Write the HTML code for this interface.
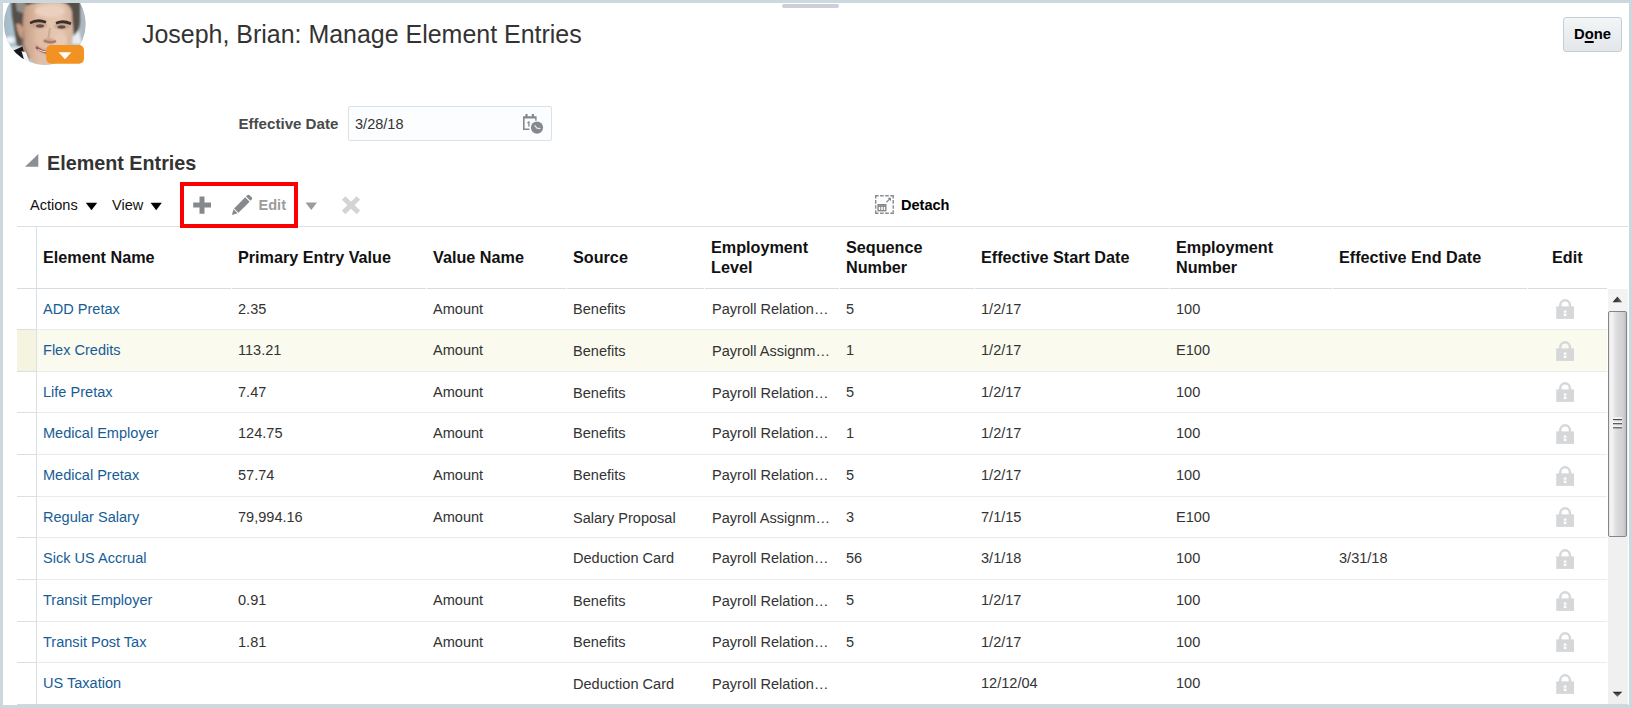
<!DOCTYPE html>
<html>
<head>
<meta charset="utf-8">
<title>Manage Element Entries</title>
<style>
html,body{margin:0;padding:0;}
body{width:1632px;height:708px;overflow:hidden;background:#fff;font-family:"Liberation Sans",Arial,sans-serif;color:#333;position:relative;}
.abs{position:absolute;white-space:nowrap;}
.bd{position:absolute;background:#cbd8de;}
#handle{left:782px;top:4px;width:57px;height:3.5px;border-radius:2px;background:#cccedb;}
#title{left:142px;top:19px;font-size:24.96px;line-height:30px;color:#333;}
#done{left:1563px;top:17px;width:57px;height:33px;border:1px solid #c4ced7;border-radius:3px;background:linear-gradient(#f3f5f6,#e3e7ea);font-weight:bold;font-size:14.8px;line-height:33px;text-align:center;color:#000;}
#done u{text-decoration:underline;text-decoration-thickness:1.6px;text-underline-offset:2px;}
#efl{left:238.5px;top:114px;font-weight:bold;font-size:15.1px;line-height:20px;color:#4a4a4a;}
#efi{left:348px;top:106px;width:202px;height:33px;border:1px solid #dde2e6;border-radius:2px;background:#fcfdfe;}
#efv{left:355px;top:114px;font-size:14.56px;line-height:20px;color:#333;}
#h2{left:47px;top:151px;font-weight:bold;font-size:19.76px;line-height:24px;color:#333;}
.tb{font-size:14.56px;line-height:20px;color:#111;top:195px;}
.hline{position:absolute;height:1px;background:#d9e1e7;}
.vline{position:absolute;width:1px;background:#d9e1e7;}
.th{position:absolute;font-weight:bold;font-size:16.2px;line-height:20px;color:#111;white-space:nowrap;}
.row{position:absolute;left:17px;width:1590px;height:41.6px;border-top:1px solid #ebebeb;box-sizing:border-box;}
.row.hl{background:linear-gradient(90deg,#f4f4e1 0,#f4f4e1 19px,#fafaee 19px);}
.c{position:absolute;top:0;font-size:14.56px;line-height:40px;color:#333;white-space:nowrap;}
.c.l{color:#165d96;}
.c.e{width:122px;overflow:hidden;text-overflow:ellipsis;}
.lock{position:absolute;left:1538px;}
#redbox{left:180px;top:182px;width:110px;height:38px;border:4px solid #fb0000;}
</style>
</head>
<body>
<div class="bd" style="left:0;top:0;width:1632px;height:3px"></div>
<div class="bd" style="left:0;top:0;width:3px;height:708px"></div>
<div class="bd" style="left:1629px;top:0;width:3px;height:708px"></div>
<div class="bd" style="left:0;top:705px;width:1632px;height:3px"></div>
<div class="abs" style="left:17px;top:704px;width:1611px;height:1px;background:#cfd9df"></div>
<div class="abs" id="handle"></div>
<svg class="abs" style="left:3px;top:3px" width="86" height="64" viewBox="3 3 86 64">
<defs>
<clipPath id="avc"><circle cx="44.8" cy="24" r="40.9"/></clipPath>
<filter id="b1" x="-20%" y="-20%" width="140%" height="140%"><feGaussianBlur stdDeviation="1.1"/></filter>
<filter id="b2" x="-20%" y="-20%" width="140%" height="140%"><feGaussianBlur stdDeviation="0.7"/></filter>
<linearGradient id="bgg" x1="0" x2="1" y1="0" y2="0"><stop offset="0" stop-color="#9db6c4"/><stop offset="0.25" stop-color="#b9cad3"/><stop offset="0.8" stop-color="#b9c0c8"/><stop offset="1" stop-color="#aab2bb"/></linearGradient>
<linearGradient id="skin" x1="0" x2="1" y1="0" y2="0"><stop offset="0" stop-color="#c39a82"/><stop offset="0.3" stop-color="#dfbda6"/><stop offset="0.75" stop-color="#e6c8b3"/><stop offset="1" stop-color="#d6b29b"/></linearGradient>
</defs>
<g clip-path="url(#avc)">
<rect x="0" y="0" width="90" height="70" fill="url(#bgg)"/>
<g filter="url(#b1)">
<ellipse cx="10" cy="40" rx="4.5" ry="3.5" fill="#eef4f8"/>
<rect x="4" y="47" width="18" height="3.5" fill="#e2eaef"/>
<path d="M73 36 L79 31 L82 44 L72 44 Z" fill="#e9edf0"/>
<path d="M12 -4 H80 V18 Q81 28 74 36 L71 14 L30 7 L25 28 L24 46 L17 46 L14 28 Q10 10 12 -4 Z" fill="#54504a"/>
<path d="M15 -2 Q24 1 29 7 L25 14 L17 11 Z" fill="#908e89"/>
<path d="M16 24 Q20 22 23 28 L24 40 Q18 38 16 24 Z" fill="#c99c82"/>
<path d="M26 6 Q40 0 60 2 Q72 4 72 14 L73 30 Q72 48 64 58 Q56 68 46 68 Q34 68 28 54 L23 30 Q22 14 26 6 Z" fill="url(#skin)"/>
<ellipse cx="50" cy="11" rx="15" ry="6" fill="#ead0be"/>
<ellipse cx="60" cy="40" rx="7" ry="7" fill="#e8cab6"/><ellipse cx="39" cy="25" rx="8" ry="3.6" fill="#bf9883" opacity="0.75"/><ellipse cx="62" cy="26" rx="8" ry="3.6" fill="#bf9883" opacity="0.75"/><ellipse cx="49" cy="41" rx="6" ry="2.6" fill="#b98f7a" opacity="0.7"/><path d="M34 44 Q40 56 54 56 L54 50 Q42 50 36 44 Z" fill="#c49a86" opacity="0.7"/>
<path d="M23 30 Q24 46 30 58 L27 60 L22 46 Z" fill="#a47d66"/>
</g>
<g filter="url(#b2)">
<path d="M8 53 L22.5 46.5 L29 70 H8 Z" fill="#12161c"/>
<path d="M21.5 51 L26 52.5 L31.5 68 L26.5 68 Z" fill="#f4f5f7"/>
<path d="M29.5 22 Q37 17 46.5 21 L45.5 23.6 Q37 20.8 30.5 24.2 Z" fill="#3a2e28"/>
<path d="M55.5 22 Q63 18.5 71.5 22.5 L70.5 25 Q63 21.8 56.5 24.4 Z" fill="#3a2e28"/>
<ellipse cx="40" cy="26" rx="4" ry="1.7" fill="#5f4d44"/>
<ellipse cx="61.5" cy="27" rx="4" ry="1.7" fill="#5f4d44"/>
<path d="M50 28 L48 40" stroke="#cfa890" stroke-width="2" fill="none"/>
<path d="M44 40.5 Q50 44 56 41" stroke="#a97a64" stroke-width="2.2" fill="none"/>
<path d="M36 47 Q42 52.5 50 52.5" stroke="#99594f" stroke-width="2.4" fill="none"/>
<path d="M38 49.5 Q43 52 48 52" stroke="#f0e4e0" stroke-width="1" fill="none"/>
</g>
</g>
<rect x="46.2" y="45" width="37.8" height="18.8" rx="5" ry="5" fill="#f29222"/>
<path d="M58.5 52.2 H71.4 L65 59.2 Z" fill="#fff"/>
</svg>

<div class="abs" id="title">Joseph, Brian: Manage Element Entries</div>
<div class="abs" id="done">D<u>o</u>ne</div>
<div class="abs" id="efl">Effective Date</div>
<div class="abs" id="efi"></div>
<div class="abs" id="efv">3/28/18</div>
<svg class="abs" style="left:522px;top:113px" width="24" height="24" viewBox="0 0 24 24"><path d="M1 3.2 H14.6 V9 H13.2 V5.6 H2.6 V15.4 H7.4 V17 H1 Z" fill="#85898d"/><rect x="3.4" y="1" width="2.2" height="3.4" fill="#85898d"/><rect x="9.8" y="1" width="2.2" height="3.4" fill="#85898d"/><path d="M5.2 9.4 L6.6 8.2 H7.6 V13.6 H6.2 V10 L5.2 10.6 Z" fill="#85898d"/><circle cx="15" cy="14.6" r="7.1" fill="#fcfdfe"/><circle cx="15" cy="14.6" r="6.1" fill="#85898d"/><path d="M12.6 12.4 L15 15.2 L18.4 15.6" stroke="#e8eaec" stroke-width="1.2" fill="none"/></svg>

<svg class="abs" style="left:24px;top:153px" width="16" height="16" viewBox="0 0 16 16"><path d="M14.3 1 V13.8 H1 Z" fill="#8a9096"/></svg>
<div class="abs" id="h2">Element Entries</div>
<div class="abs tb" style="left:30px">Actions</div>
<svg class="abs" style="left:85px;top:202px" width="13" height="9" viewBox="0 0 13 9"><path d="M0.8 0.7 H12.2 L6.5 8.2 Z" fill="#000"/></svg>
<div class="abs tb" style="left:112px">View</div>
<svg class="abs" style="left:150px;top:202px" width="13" height="9" viewBox="0 0 13 9"><path d="M0.6 0.7 H11.8 L6.2 8.2 Z" fill="#000"/></svg>
<svg class="abs" style="left:192px;top:195px" width="20" height="20" viewBox="0 0 20 20"><path d="M7.5 1.4 H12.5 V7.4 H19 V12.4 H12.5 V18.8 H7.5 V12.4 H1.2 V7.4 H7.5 Z" fill="#85898d"/></svg>
<svg class="abs" style="left:231px;top:194px" width="22" height="22" viewBox="0 0 22 22"><path d="M0.9 20.9 L2.5 15.2 L6.6 19.3 Z" fill="#85898d"/><path d="M3.1 14.4 L14.2 3.3 L18.6 7.7 L7.5 18.8 Z" fill="#85898d"/><path d="M15 2.5 L16.5 1 Q17.4 0.3 18.3 1.1 L20.8 3.6 Q21.5 4.5 20.8 5.3 L19.4 6.8 Z" fill="#85898d"/></svg>
<svg class="abs" style="left:305px;top:202px" width="13" height="9" viewBox="0 0 13 9"><path d="M0.5 0.6 H12 L6.25 8 Z" fill="#9b9b9b"/></svg>
<svg class="abs" style="left:341px;top:195px" width="20" height="20" viewBox="0 0 20 20"><path d="M2.6 3 L17.4 17.4 M17.4 3 L2.6 17.4" stroke="#d2d4d6" stroke-width="5" fill="none"/></svg>
<svg class="abs" style="left:874px;top:194px" width="21" height="21" viewBox="0 0 21 21"><path d="M1 1.7 H19.9 M19.2 1 V19.9 M19.9 19.2 H1 M1.7 19.9 V1" fill="none" stroke="#888c90" stroke-width="1.4" stroke-dasharray="3.6 1.5"/><rect x="4.1" y="10.7" width="7.7" height="6" fill="#fff" stroke="#85898d" stroke-width="1.4"/><path d="M4 12.1 H12" stroke="#85898d" stroke-width="1.6" fill="none"/><path d="M6.7 10.5 V16.8 M9.3 10.5 V16.8" stroke="#85898d" stroke-width="1" fill="none"/><path d="M12.4 8.2 L16 4.6" stroke="#85898d" stroke-width="1.3" fill="none"/><path d="M13.6 3.8 H17 V7.2 Z" fill="#85898d"/></svg>

<div class="abs tb" style="left:258.5px;font-weight:bold;color:#9c9c9c">Edit</div>
<div class="abs tb" style="left:901px;font-weight:bold;color:#000">Detach</div>

<div class="hline" style="left:17px;top:226px;width:1611px"></div>
<div class="hline" style="left:17px;top:288px;width:1590px;background:#d3dce3"></div>
<div class="th" style="left:43px;top:247px">Element Name</div>
<div class="th" style="left:238px;top:247px">Primary Entry Value</div>
<div class="th" style="left:433px;top:247px">Value Name</div>
<div class="th" style="left:573px;top:247px">Source</div>
<div class="th" style="left:711px;top:237px">Employment<br>Level</div>
<div class="th" style="left:846px;top:237px">Sequence<br>Number</div>
<div class="th" style="left:981px;top:247px">Effective Start Date</div>
<div class="th" style="left:1176px;top:237px">Employment<br>Number</div>
<div class="th" style="left:1339px;top:247px">Effective End Date</div>
<div class="th" style="left:1552px;top:247px">Edit</div>
<div class="row" style="top:288px;height:41px;border-top-color:#d6dee5"><div class="c l" style="left:26px">ADD Pretax</div><div class="c" style="left:221px">2.35</div><div class="c" style="left:416px">Amount</div><div class="c" style="left:556px">Benefits</div><div class="c e" style="left:695px">Payroll Relationship</div><div class="c" style="left:829px">5</div><div class="c" style="left:964px">1/2/17</div><div class="c" style="left:1159px">100</div><svg class="lock" style="bottom:9.2px" width="20" height="22" viewBox="0 0 20 22"><path d="M5.25 9 V7.2 a4.85 4.85 0 0 1 9.7 0 V9" fill="none" stroke="#d5d7d9" stroke-width="2.5"/><rect x="1.2" y="8.4" width="17.8" height="12.5" fill="#d5d7d9"/><rect x="8.8" y="12.5" width="2.6" height="2.2" fill="#fff"/><rect x="8.8" y="15.6" width="2.6" height="2.5" fill="#fff"/></svg></div>
<div class="row hl" style="top:329px;height:42px"><div class="c l" style="left:26px">Flex Credits</div><div class="c" style="left:221px">113.21</div><div class="c" style="left:416px">Amount</div><div class="c" style="left:556px;top:1px">Benefits</div><div class="c e" style="left:695px;top:1px">Payroll Assignment</div><div class="c" style="left:829px">1</div><div class="c" style="left:964px">1/2/17</div><div class="c" style="left:1159px">E100</div><svg class="lock" style="bottom:9.2px" width="20" height="22" viewBox="0 0 20 22"><path d="M5.25 9 V7.2 a4.85 4.85 0 0 1 9.7 0 V9" fill="none" stroke="#d5d7d9" stroke-width="2.5"/><rect x="1.2" y="8.4" width="17.8" height="12.5" fill="#d5d7d9"/><rect x="8.8" y="12.5" width="2.6" height="2.2" fill="#fff"/><rect x="8.8" y="15.6" width="2.6" height="2.5" fill="#fff"/></svg></div>
<div class="row" style="top:371px;height:41px"><div class="c l" style="left:26px">Life Pretax</div><div class="c" style="left:221px">7.47</div><div class="c" style="left:416px">Amount</div><div class="c" style="left:556px;top:1px">Benefits</div><div class="c e" style="left:695px;top:1px">Payroll Relationship</div><div class="c" style="left:829px">5</div><div class="c" style="left:964px">1/2/17</div><div class="c" style="left:1159px">100</div><svg class="lock" style="bottom:9.2px" width="20" height="22" viewBox="0 0 20 22"><path d="M5.25 9 V7.2 a4.85 4.85 0 0 1 9.7 0 V9" fill="none" stroke="#d5d7d9" stroke-width="2.5"/><rect x="1.2" y="8.4" width="17.8" height="12.5" fill="#d5d7d9"/><rect x="8.8" y="12.5" width="2.6" height="2.2" fill="#fff"/><rect x="8.8" y="15.6" width="2.6" height="2.5" fill="#fff"/></svg></div>
<div class="row" style="top:412px;height:42px"><div class="c l" style="left:26px">Medical Employer</div><div class="c" style="left:221px">124.75</div><div class="c" style="left:416px">Amount</div><div class="c" style="left:556px">Benefits</div><div class="c e" style="left:695px">Payroll Relationship</div><div class="c" style="left:829px">1</div><div class="c" style="left:964px">1/2/17</div><div class="c" style="left:1159px">100</div><svg class="lock" style="bottom:9.2px" width="20" height="22" viewBox="0 0 20 22"><path d="M5.25 9 V7.2 a4.85 4.85 0 0 1 9.7 0 V9" fill="none" stroke="#d5d7d9" stroke-width="2.5"/><rect x="1.2" y="8.4" width="17.8" height="12.5" fill="#d5d7d9"/><rect x="8.8" y="12.5" width="2.6" height="2.2" fill="#fff"/><rect x="8.8" y="15.6" width="2.6" height="2.5" fill="#fff"/></svg></div>
<div class="row" style="top:454px;height:42px"><div class="c l" style="left:26px">Medical Pretax</div><div class="c" style="left:221px">57.74</div><div class="c" style="left:416px">Amount</div><div class="c" style="left:556px">Benefits</div><div class="c e" style="left:695px">Payroll Relationship</div><div class="c" style="left:829px">5</div><div class="c" style="left:964px">1/2/17</div><div class="c" style="left:1159px">100</div><svg class="lock" style="bottom:9.2px" width="20" height="22" viewBox="0 0 20 22"><path d="M5.25 9 V7.2 a4.85 4.85 0 0 1 9.7 0 V9" fill="none" stroke="#d5d7d9" stroke-width="2.5"/><rect x="1.2" y="8.4" width="17.8" height="12.5" fill="#d5d7d9"/><rect x="8.8" y="12.5" width="2.6" height="2.2" fill="#fff"/><rect x="8.8" y="15.6" width="2.6" height="2.5" fill="#fff"/></svg></div>
<div class="row" style="top:496px;height:41px"><div class="c l" style="left:26px">Regular Salary</div><div class="c" style="left:221px">79,994.16</div><div class="c" style="left:416px">Amount</div><div class="c" style="left:556px;top:1px">Salary Proposal</div><div class="c e" style="left:695px;top:1px">Payroll Assignment</div><div class="c" style="left:829px">3</div><div class="c" style="left:964px">7/1/15</div><div class="c" style="left:1159px">E100</div><svg class="lock" style="bottom:9.2px" width="20" height="22" viewBox="0 0 20 22"><path d="M5.25 9 V7.2 a4.85 4.85 0 0 1 9.7 0 V9" fill="none" stroke="#d5d7d9" stroke-width="2.5"/><rect x="1.2" y="8.4" width="17.8" height="12.5" fill="#d5d7d9"/><rect x="8.8" y="12.5" width="2.6" height="2.2" fill="#fff"/><rect x="8.8" y="15.6" width="2.6" height="2.5" fill="#fff"/></svg></div>
<div class="row" style="top:537px;height:42px"><div class="c l" style="left:26px">Sick US Accrual</div><div class="c" style="left:556px">Deduction Card</div><div class="c e" style="left:695px">Payroll Relationship</div><div class="c" style="left:829px">56</div><div class="c" style="left:964px">3/1/18</div><div class="c" style="left:1159px">100</div><div class="c" style="left:1322px">3/31/18</div><svg class="lock" style="bottom:9.2px" width="20" height="22" viewBox="0 0 20 22"><path d="M5.25 9 V7.2 a4.85 4.85 0 0 1 9.7 0 V9" fill="none" stroke="#d5d7d9" stroke-width="2.5"/><rect x="1.2" y="8.4" width="17.8" height="12.5" fill="#d5d7d9"/><rect x="8.8" y="12.5" width="2.6" height="2.2" fill="#fff"/><rect x="8.8" y="15.6" width="2.6" height="2.5" fill="#fff"/></svg></div>
<div class="row" style="top:579px;height:42px"><div class="c l" style="left:26px">Transit Employer</div><div class="c" style="left:221px">0.91</div><div class="c" style="left:416px">Amount</div><div class="c" style="left:556px;top:1px">Benefits</div><div class="c e" style="left:695px;top:1px">Payroll Relationship</div><div class="c" style="left:829px">5</div><div class="c" style="left:964px">1/2/17</div><div class="c" style="left:1159px">100</div><svg class="lock" style="bottom:9.2px" width="20" height="22" viewBox="0 0 20 22"><path d="M5.25 9 V7.2 a4.85 4.85 0 0 1 9.7 0 V9" fill="none" stroke="#d5d7d9" stroke-width="2.5"/><rect x="1.2" y="8.4" width="17.8" height="12.5" fill="#d5d7d9"/><rect x="8.8" y="12.5" width="2.6" height="2.2" fill="#fff"/><rect x="8.8" y="15.6" width="2.6" height="2.5" fill="#fff"/></svg></div>
<div class="row" style="top:621px;height:41px"><div class="c l" style="left:26px">Transit Post Tax</div><div class="c" style="left:221px">1.81</div><div class="c" style="left:416px">Amount</div><div class="c" style="left:556px">Benefits</div><div class="c e" style="left:695px">Payroll Relationship</div><div class="c" style="left:829px">5</div><div class="c" style="left:964px">1/2/17</div><div class="c" style="left:1159px">100</div><svg class="lock" style="bottom:9.2px" width="20" height="22" viewBox="0 0 20 22"><path d="M5.25 9 V7.2 a4.85 4.85 0 0 1 9.7 0 V9" fill="none" stroke="#d5d7d9" stroke-width="2.5"/><rect x="1.2" y="8.4" width="17.8" height="12.5" fill="#d5d7d9"/><rect x="8.8" y="12.5" width="2.6" height="2.2" fill="#fff"/><rect x="8.8" y="15.6" width="2.6" height="2.5" fill="#fff"/></svg></div>
<div class="row" style="top:662px;height:42px"><div class="c l" style="left:26px">US Taxation</div><div class="c" style="left:556px;top:1px">Deduction Card</div><div class="c e" style="left:695px;top:1px">Payroll Relationship</div><div class="c" style="left:964px">12/12/04</div><div class="c" style="left:1159px">100</div><svg class="lock" style="bottom:9.2px" width="20" height="22" viewBox="0 0 20 22"><path d="M5.25 9 V7.2 a4.85 4.85 0 0 1 9.7 0 V9" fill="none" stroke="#d5d7d9" stroke-width="2.5"/><rect x="1.2" y="8.4" width="17.8" height="12.5" fill="#d5d7d9"/><rect x="8.8" y="12.5" width="2.6" height="2.2" fill="#fff"/><rect x="8.8" y="15.6" width="2.6" height="2.5" fill="#fff"/></svg></div>
<div class="hline" style="left:17px;top:329px;width:19px"></div>
<div class="hline" style="left:17px;top:371px;width:19px"></div>
<div class="hline" style="left:17px;top:412px;width:19px"></div>
<div class="hline" style="left:17px;top:454px;width:19px"></div>
<div class="hline" style="left:17px;top:496px;width:19px"></div>
<div class="hline" style="left:17px;top:537px;width:19px"></div>
<div class="hline" style="left:17px;top:579px;width:19px"></div>
<div class="hline" style="left:17px;top:621px;width:19px"></div>
<div class="hline" style="left:17px;top:662px;width:19px"></div>
<div class="abs" style="left:231px;top:288px;width:1px;height:1px;background:#fff"></div>
<div class="abs" style="left:426px;top:288px;width:1px;height:1px;background:#fff"></div>
<div class="abs" style="left:566px;top:288px;width:1px;height:1px;background:#fff"></div>
<div class="abs" style="left:704px;top:288px;width:1px;height:1px;background:#fff"></div>
<div class="abs" style="left:839px;top:288px;width:1px;height:1px;background:#fff"></div>
<div class="abs" style="left:974px;top:288px;width:1px;height:1px;background:#fff"></div>
<div class="abs" style="left:1169px;top:288px;width:1px;height:1px;background:#fff"></div>
<div class="abs" style="left:1332px;top:288px;width:1px;height:1px;background:#fff"></div>
<div class="abs" style="left:1527px;top:288px;width:1px;height:1px;background:#fff"></div>
<div class="vline" style="left:36px;top:226px;height:478px"></div>
<div class="abs" style="left:1608px;top:289px;width:20px;height:415px;background:#f0f0f0"></div>
<svg class="abs" style="left:1608px;top:289px" width="20" height="22" viewBox="0 0 20 22"><defs><linearGradient id="sa1" x1="0" x2="1" y1="0" y2="0"><stop offset="0" stop-color="#1c1c1c"/><stop offset="1" stop-color="#6a6a6a"/></linearGradient><linearGradient id="sa2" x1="0" x2="0" y1="0" y2="1"><stop offset="0" stop-color="#1c1c1c"/><stop offset="1" stop-color="#8a8a8a"/></linearGradient></defs><rect width="20" height="22" fill="#f3f3f3"/><path d="M4.6 13.2 L9.4 7.6 L14.2 13.2 Z" fill="url(#sa1)"/></svg>
<div class="abs" style="left:1608px;top:311px;width:16.6px;height:224px;border:1px solid #858585;border-radius:2px;background:linear-gradient(90deg,#e9e9eb 0%,#f5f5f6 18%,#e6e6e8 32%,#dadadd 50%,#d2d2d6 80%,#bdbdc2 100%)"></div>
<svg class="abs" style="left:1612px;top:417px" width="12" height="14" viewBox="0 0 12 14"><path d="M1 1.6 H10 M1 5.7 H10 M1 9.8 H10" stroke="#f4f4f4" stroke-width="2.6"/><path d="M1 2.6 H10 M1 6.7 H10 M1 10.8 H10" stroke="#3a3a3a" stroke-width="1"/></svg>
<svg class="abs" style="left:1608px;top:684px" width="20" height="20" viewBox="0 0 20 20"><path d="M4.7 7.8 H14.2 L9.4 12.9 Z" fill="url(#sa2)"/></svg>

<div class="abs" id="redbox"></div>
</body>
</html>
